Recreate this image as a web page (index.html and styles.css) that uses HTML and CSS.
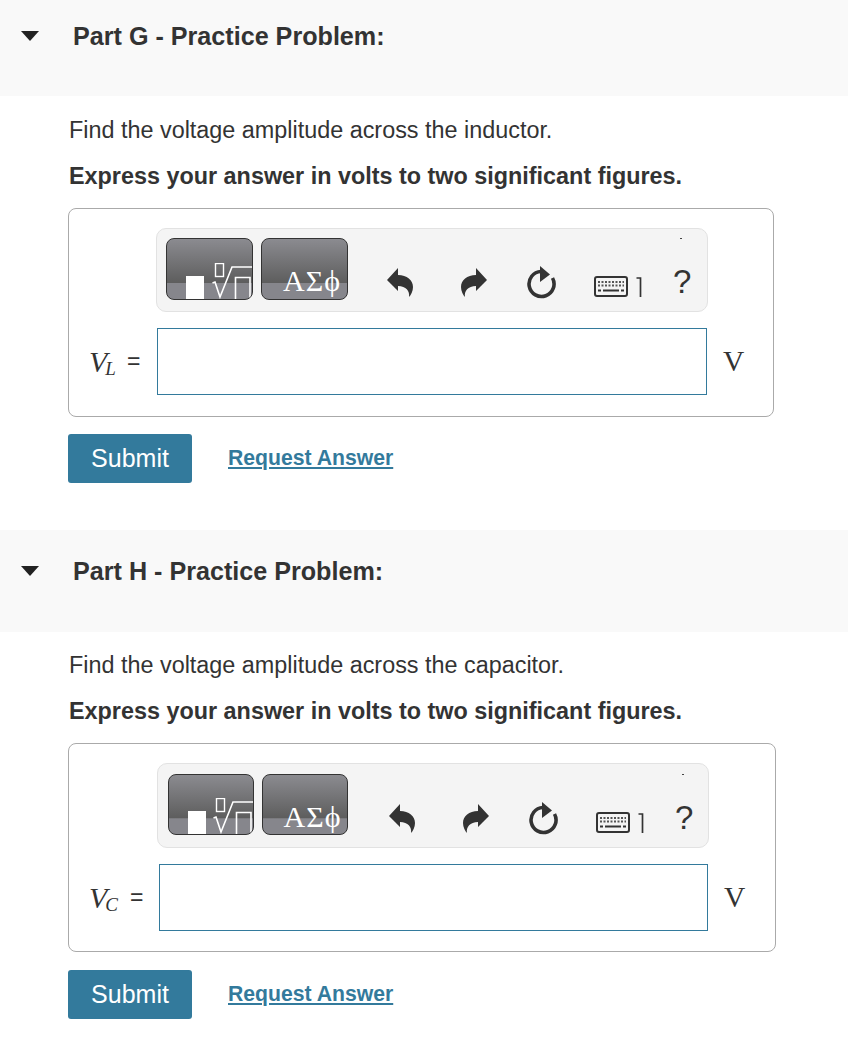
FILE: index.html
```html
<!DOCTYPE html>
<html lang="en">
<head>
  <meta charset="UTF-8">
  <title>Practice Problems</title>
  <link rel="stylesheet" href="styles.css">
</head>
<body>
  <!-- Part G -->
  <div class="part part-g">
    <div class="part-header">
      <svg class="caret" width="20" height="12" viewBox="0 0 20 12"><path d="M1 1h18l-9 10z"/></svg>
      <h2>Part G - Practice Problem:</h2>
    </div>
    <div class="part-body">
      <p class="question">Find the voltage amplitude across the inductor.</p>
      <p class="instruction">Express your answer in volts to two significant figures.</p>
      <div class="answer-box">
        <div class="toolbar">
          <span class="tick"></span>
          <button class="tpl-btn">
            <span class="tpl-square"></span>
            <svg class="tpl-root" width="40" height="36" viewBox="0 0 40 36">
              <rect x="3.5" y="0.5" width="8" height="13" fill="none" stroke="#fff" stroke-width="1.400"/>
              <path d="M.5 20l2.500-1 5 15 12-30h20" fill="none" stroke="#fff" stroke-width="1.600"/>
              <path d="M23.500 36V14.500H38V36" fill="none" stroke="#fff" stroke-width="1.600"/>
            </svg>
          </button>
          <button class="tpl-btn greek">&Alpha;&Sigma;&#981;</button>
          <svg class="icon undo" width="26" height="30" viewBox="0 0 26 30"><path d="M0 13 11 1v7c9 0 15 5 15 12 0 4-2 8-4 10 1-6-3-11-11-11v5z"/></svg>
          <svg class="icon redo" width="26" height="30" viewBox="0 0 26 30"><path d="M26 13 15 1v7C6 8 0 13 0 20c0 4 2 8 4 10-1-6 3-11 11-11v5z"/></svg>
          <svg class="icon reset" width="30" height="34" viewBox="0 0 30 34">
            <path d="M14 6.500A12.500 12.500 0 1 0 25.500 13" fill="none" stroke="#333" stroke-width="3.600"/>
            <path d="M13 1l10 8.500L13 17z" fill="#333"/>
          </svg>
          <svg class="icon keyboard" width="34" height="21" viewBox="0 0 34 21">
            <rect x="1" y="1" width="32" height="19" rx="2" fill="none" stroke="#333" stroke-width="2"/>
            <path d="M4 6h26M4 9.500h26" stroke="#555" stroke-width="2" stroke-dasharray="2 1.500"/>
            <path d="M4 14.500h3M9 14.500h16M27 14.500h3" stroke="#333" stroke-width="2"/>
          </svg>
          <svg class="icon bracket" width="6" height="20" viewBox="0 0 6 20"><path d="M.5 1H4.500v19" fill="none" stroke="#333" stroke-width="1.700"/></svg>
          <span class="help">?</span>
        </div>
        <div class="answer-row">
          <span class="math"><i>V<sub>L</sub></i><span class="eq">=</span></span>
          <input class="answer-input" type="text">
          <span class="unit">V</span>
        </div>
      </div>
      <div class="actions">
        <button class="submit">Submit</button>
        <a class="request" href="#">Request Answer</a>
      </div>
    </div>
  </div>

  <!-- Part H -->
  <div class="part part-h">
    <div class="part-header">
      <svg class="caret" width="20" height="12" viewBox="0 0 20 12"><path d="M1 1h18l-9 10z"/></svg>
      <h2>Part H - Practice Problem:</h2>
    </div>
    <div class="part-body">
      <p class="question">Find the voltage amplitude across the capacitor.</p>
      <p class="instruction">Express your answer in volts to two significant figures.</p>
      <div class="answer-box">
        <div class="toolbar">
          <span class="tick"></span>
          <button class="tpl-btn">
            <span class="tpl-square"></span>
            <svg class="tpl-root" width="40" height="36" viewBox="0 0 40 36">
              <rect x="3.5" y="0.5" width="8" height="13" fill="none" stroke="#fff" stroke-width="1.400"/>
              <path d="M.5 20l2.500-1 5 15 12-30h20" fill="none" stroke="#fff" stroke-width="1.600"/>
              <path d="M23.500 36V14.500H38V36" fill="none" stroke="#fff" stroke-width="1.600"/>
            </svg>
          </button>
          <button class="tpl-btn greek">&Alpha;&Sigma;&#981;</button>
          <svg class="icon undo" width="26" height="30" viewBox="0 0 26 30"><path d="M0 13 11 1v7c9 0 15 5 15 12 0 4-2 8-4 10 1-6-3-11-11-11v5z"/></svg>
          <svg class="icon redo" width="26" height="30" viewBox="0 0 26 30"><path d="M26 13 15 1v7C6 8 0 13 0 20c0 4 2 8 4 10-1-6 3-11 11-11v5z"/></svg>
          <svg class="icon reset" width="30" height="34" viewBox="0 0 30 34">
            <path d="M14 6.500A12.500 12.500 0 1 0 25.500 13" fill="none" stroke="#333" stroke-width="3.600"/>
            <path d="M13 1l10 8.500L13 17z" fill="#333"/>
          </svg>
          <svg class="icon keyboard" width="34" height="21" viewBox="0 0 34 21">
            <rect x="1" y="1" width="32" height="19" rx="2" fill="none" stroke="#333" stroke-width="2"/>
            <path d="M4 6h26M4 9.500h26" stroke="#555" stroke-width="2" stroke-dasharray="2 1.500"/>
            <path d="M4 14.500h3M9 14.500h16M27 14.500h3" stroke="#333" stroke-width="2"/>
          </svg>
          <svg class="icon bracket" width="6" height="20" viewBox="0 0 6 20"><path d="M.5 1H4.500v19" fill="none" stroke="#333" stroke-width="1.700"/></svg>
          <span class="help">?</span>
        </div>
        <div class="answer-row">
          <span class="math"><i>V<sub>C</sub></i><span class="eq">=</span></span>
          <input class="answer-input" type="text">
          <span class="unit">V</span>
        </div>
      </div>
      <div class="actions">
        <button class="submit">Submit</button>
        <a class="request" href="#">Request Answer</a>
      </div>
    </div>
  </div>
</body>
</html>
```

FILE: styles.css
```css
/* General Reset */
* {
  margin: 0;
  padding: 0;
  box-sizing: border-box;
  font-family: "Liberation Sans", Arial, sans-serif;
}

body {
  background-color: #fff;
  color: #333;
  overflow: hidden;
}

/* Part Header */
.part-header {
  display: flex;
  align-items: flex-start;
  height: 96px;
  padding: 21px 0 0 20px;
  background-color: #f9f9f9;
}

.part-h {
  margin-top: 47px;
}

.part-h .part-header {
  height: 102px;
  padding-top: 26px;
}

.caret {
  margin: 9px 33px 0 0;
  fill: #222;
}

.part-header h2 {
  font-size: 25.150px;
  line-height: 30px;
  font-weight: bold;
}

/* Question */
.part-body {
  padding: 20px 0 0 68px;
}

.part-h .part-body {
  padding-top: 19px;
}

.question {
  padding-left: 1px;
  font-size: 23.380px;
  line-height: 28px;
}

.instruction {
  margin-top: 18px;
  padding-left: 1px;
  font-size: 23.380px;
  line-height: 28px;
  font-weight: bold;
}

/* Answer Box */
.answer-box {
  width: 706px;
  height: 209px;
  margin-top: 18px;
  padding: 19px 0 0 87px;
  border: 1px solid #aaa;
  border-radius: 8px;
}

.part-h .answer-box {
  width: 708px;
  padding-left: 88px;
}

.toolbar {
  position: relative;
  display: flex;
  align-items: flex-start;
  width: 552px;
  height: 84px;
  padding: 9px 0 0 9px;
  background-color: #f4f4f4;
  border: 1px solid #e2e2e2;
  border-radius: 10px;
}

.part-h .toolbar {
  height: 85px;
  padding: 10px 0 0 10px;
}

.tick {
  position: absolute;
  top: 9px;
  left: 523px;
  width: 2px;
  height: 1px;
  background-color: #444;
}

.part-h .tick {
  top: 10px;
  left: 524px;
}

.tpl-btn {
  position: relative;
  display: block;
  flex: none;
  width: 87px;
  height: 62px;
  margin-right: 8px;
  border: 1px solid #333;
  border-radius: 8px;
  overflow: hidden;
  background: linear-gradient(#8b8b90 0%, #5e5e5e 72%, #5e5e5e 73%, #86868c 74%, #86868c 100%);
}

.part-h .tpl-btn {
  width: 86px;
  height: 61px;
}

.tpl-square {
  position: absolute;
  left: 19px;
  bottom: 0;
  width: 18px;
  height: 23px;
  background-color: #fff;
}

.tpl-root {
  position: absolute;
  right: 0;
  bottom: 0;
}

.greek {
  padding: 24px 0 0 15px;
  font-family: "Liberation Serif", serif;
  font-size: 30px;
  line-height: 30px;
  color: #fff;
  letter-spacing: 1px;
}

.icon {
  flex: none;
  fill: #333;
}

.undo {
  margin: 29px 0 0 31px;
}

.part-h .undo {
  margin-left: 33px;
}

.redo {
  margin: 29px 0 0 48px;
}

.reset {
  margin: 27px 0 0 40px;
}

.keyboard {
  margin: 38px 0 0 37px;
}

.bracket {
  margin: 39px 0 0 8px;
}

.help {
  margin: 26px 0 0 31px;
  font-size: 33px;
  line-height: 36px;
}

.answer-row {
  display: flex;
  align-items: center;
  height: 67px;
  margin: 16px 0 0 -87px;
}

.part-h .answer-row {
  margin-left: -88px;
}

.math {
  display: flex;
  align-items: center;
  flex: none;
  width: 88px;
  padding-left: 20px;
  font-family: "Liberation Serif", serif;
  font-size: 30px;
}

.part-h .math {
  width: 90px;
}

.math i {
  font-family: "Liberation Serif", serif;
}

.math sub {
  font-family: "Liberation Serif", serif;
  font-size: 19px;
  line-height: 0;
  vertical-align: -3px;
  margin-left: -2px;
}

.eq {
  margin-left: 11px;
  font-size: 23px;
}

.part-h .eq {
  margin-left: 12px;
}

.answer-input {
  width: 550px;
  height: 67px;
  background-color: #fff;
  border: 1px solid #337a9c;
}

.part-h .answer-input {
  width: 549px;
}

.unit {
  margin-left: 16px;
  font-family: "Liberation Serif", serif;
  font-size: 29.500px;
}

/* Actions */
.actions {
  display: flex;
  align-items: center;
  margin-top: 17px;
}

.part-h .actions {
  margin-top: 18px;
}

.submit {
  width: 124px;
  height: 49px;
  background-color: #337a9c;
  color: #fff;
  border: none;
  border-radius: 3px;
  font-size: 25px;
}

.request {
  margin: 0 0 2px 36px;
  color: #337a9c;
  font-size: 21.200px;
  font-weight: bold;
}
```
